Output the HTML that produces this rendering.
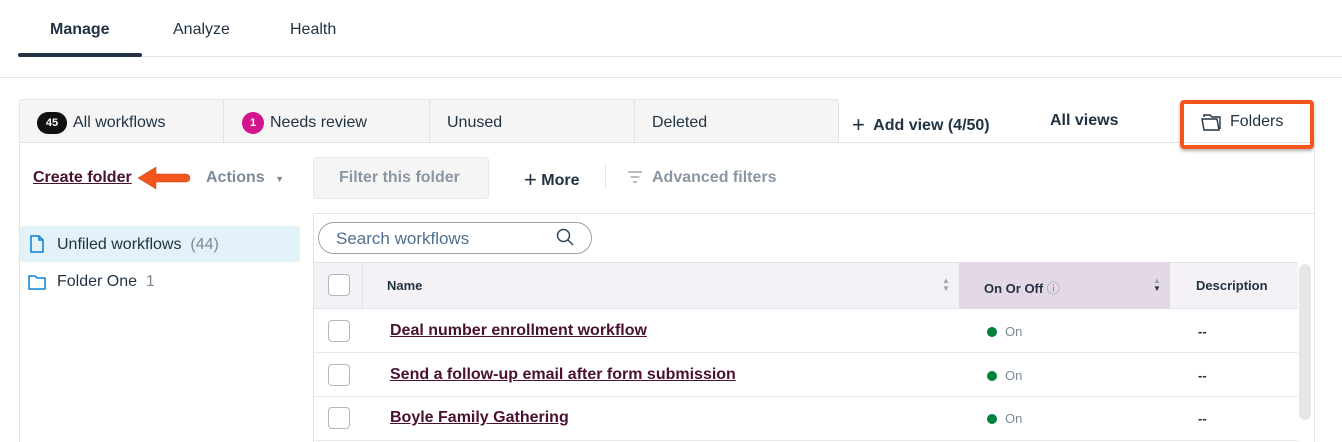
<!DOCTYPE html>
<html><head><style>
*{box-sizing:border-box;margin:0;padding:0}
body{width:1342px;height:442px;overflow:hidden;background:#fff;font-family:"Liberation Sans",sans-serif;color:#213343;position:relative}
.a{position:absolute}
.t{font-size:16px}
.b{font-weight:bold}
.cb{position:absolute;width:22px;height:22px;border:1px solid #b0b8c0;border-radius:4px;background:#fff}
.lnk{color:#4a1230;font-weight:bold;text-decoration:underline;font-size:16px}
.dot{display:inline-block;width:10px;height:10px;border-radius:50%;background:#00823b;margin-right:8px;vertical-align:-1px}
</style></head><body>
<div class="a t b" style="left:50px;top:21px;font-size:16px">Manage</div>
<div class="a t" style="left:173px;top:21px;font-size:16px">Analyze</div>
<div class="a t" style="left:290px;top:21px;font-size:16px">Health</div>
<div class="a" style="left:18px;top:56px;width:1324px;height:1px;background:#dfe3eb"></div>
<div class="a" style="left:18px;top:53px;width:124px;height:4px;background:#213343;border-radius:2px"></div>
<div class="a" style="left:0;top:77px;width:1342px;height:1px;background:#dfe3eb"></div>

<div class="a" style="left:19px;top:99px;width:820px;height:44px;background:#f5f5f5;border:1px solid #dfe3eb;border-bottom:none;border-radius:3px 3px 0 0"></div>
<div class="a" style="left:223px;top:99px;width:1px;height:43px;background:#dfe3eb"></div>
<div class="a" style="left:429px;top:99px;width:1px;height:43px;background:#dfe3eb"></div>
<div class="a" style="left:634px;top:99px;width:1px;height:43px;background:#dfe3eb"></div>
<div class="a" style="left:19px;top:142px;width:1296px;height:1px;background:#dfe3eb"></div>
<div class="a" style="left:37px;top:112px;width:30px;height:22px;border-radius:11px;background:#111;color:#fff;font-size:11px;font-weight:bold;text-align:center;line-height:22px">45</div>
<div class="a t" style="left:73px;top:114px">All workflows</div>
<div class="a" style="left:242px;top:112px;width:22px;height:22px;border-radius:11px;background:#d1168b;color:#fff;font-size:11px;font-weight:bold;text-align:center;line-height:22px">1</div>
<div class="a t" style="left:270px;top:114px">Needs review</div>
<div class="a t" style="left:447px;top:114px">Unused</div>
<div class="a t" style="left:652px;top:114px">Deleted</div>
<div class="a t b" style="left:852px;top:112px"><span style="font-weight:normal;font-size:22px;vertical-align:-2px">+</span>&nbsp; Add view (4/50)</div>
<div class="a t b" style="left:1050px;top:112px">All views</div>
<div class="a" style="left:1180px;top:100px;width:134px;height:49px;border:4px solid #f2561d;border-radius:4px;box-shadow:0 2px 3px rgba(0,0,0,.3)"></div>
<svg class="a" style="left:1201px;top:113px" width="22" height="18" viewBox="0 0 22 18" fill="none" stroke="#213343" stroke-width="1.4"><path d="M3 4V2h6l2 2h8v12"/><path d="M1 6h15l2 11H3z"/></svg>
<div class="a t" style="left:1230px;top:113px">Folders</div>

<div class="a" style="left:19px;top:142px;width:1px;height:300px;background:#dfe3eb"></div>
<div class="a" style="left:1314px;top:150px;width:1px;height:292px;background:#dfe3eb"></div>

<div class="a lnk" style="left:33px;top:169px;color:#4a1230">Create folder</div>
<svg class="a" style="left:136px;top:165px" width="56" height="26" viewBox="0 0 56 26"><path d="M2 13L20 2v7h30a4 4 0 0 1 0 8H20v7z" fill="#f2561d" stroke="#c63e0c" stroke-width=".5"/></svg>
<div class="a t b" style="left:206px;top:169px;color:#7c8a99">Actions <span style="font-size:9px;margin-left:6px">▼</span></div>
<div class="a" style="left:313px;top:157px;width:176px;height:42px;background:#f5f5f5;border:1px solid #e6e9ee;border-radius:3px"></div>
<div class="a t b" style="left:339px;top:169px;color:#8a96a3">Filter this folder</div>
<div class="a t b" style="left:524px;top:167px"><span style="font-weight:normal;font-size:22px;vertical-align:-2px">+</span> More</div>
<div class="a" style="left:605px;top:165px;width:1px;height:24px;background:#dfe3eb"></div>
<svg class="a" style="left:627px;top:171px" width="16" height="12" stroke="#8a96a3" stroke-width="1.3"><path d="M1 1h14M3.5 6h9M6 11h4"/></svg>
<div class="a t b" style="left:652px;top:169px;color:#8a96a3">Advanced filters</div>

<div class="a" style="left:20px;top:226px;width:280px;height:36px;background:#e3f2f9;border-radius:3px"></div>
<svg class="a" style="left:29px;top:235px" width="16" height="18" fill="none" stroke="#0b80d6" stroke-width="1.5"><path d="M2 1h8l4 4v12H2z M10 1v4h4"/></svg>
<div class="a t" style="left:57px;top:236px">Unfiled workflows <span style="color:#7c8a99">&nbsp;(44)</span></div>
<svg class="a" style="left:28px;top:274px" width="18" height="16" fill="none" stroke="#0b80d6" stroke-width="1.5"><path d="M1 2h6l2 2h8v11H1z"/></svg>
<div class="a t" style="left:57px;top:273px">Folder One <span style="color:#7c8a99">&nbsp;1</span></div>

<div class="a" style="left:313px;top:213px;width:1002px;height:1px;background:#dfe3eb"></div>
<div class="a" style="left:313px;top:213px;width:1px;height:229px;background:#dfe3eb"></div>
<div class="a" style="left:318px;top:222px;width:274px;height:32px;border:1px solid #99a5b1;border-radius:16px"></div>
<div class="a" style="left:336px;top:229px;font-size:17px;color:#516f90">Search workflows</div>
<svg class="a" style="left:556px;top:228px" width="18" height="18" fill="none" stroke="#33475b" stroke-width="1.5"><circle cx="7.5" cy="7.5" r="6"/><path d="M12 12l5 5"/></svg>

<div class="a" style="left:314px;top:262px;width:984px;height:47px;background:#f5f2f7;border-top:1px solid #dfe3eb;border-bottom:1px solid #dfe3eb"></div>
<div class="a" style="left:959px;top:262px;width:211px;height:47px;background:#e5d8e6"></div>
<div class="a" style="left:362px;top:262px;width:1px;height:47px;background:#dfe3eb"></div>
<div class="cb" style="left:328px;top:274px"></div>
<div class="a b" style="left:387px;top:278px;font-size:13px">Name</div>
<div class="a" style="left:942px;top:277px;font-size:8px;color:#99a5b1;line-height:8px">▲<br>▼</div>
<div class="a b" style="left:984px;top:278px;font-size:13px">On Or Off <span style="font-weight:normal;color:#7c8a99">ⓘ</span></div>
<div class="a" style="left:1153px;top:277px;font-size:8px;color:#99a5b1;line-height:8px">▲<br><span style="color:#213343">▼</span></div>
<div class="a b" style="left:1196px;top:278px;font-size:13px">Description</div>
<div class="a" style="left:1299px;top:264px;width:12px;height:156px;background:#e6e6e6;border-radius:6px"></div>

<div class="a" style="left:314px;top:352px;width:984px;height:1px;background:#e6e9ee"></div>
<div class="a" style="left:314px;top:396px;width:984px;height:1px;background:#e6e9ee"></div>
<div class="a" style="left:314px;top:440px;width:984px;height:1px;background:#e6e9ee"></div>

<div class="cb" style="left:328px;top:320px"></div>
<div class="a lnk" style="left:390px;top:322px">Deal number enrollment workflow</div>
<div class="a" style="left:987px;top:324px;font-size:13px;color:#7c8a99"><span class="dot"></span>On</div>
<div class="a b" style="left:1198px;top:324px;font-size:13px">--</div>

<div class="cb" style="left:328px;top:364px"></div>
<div class="a lnk" style="left:390px;top:366px">Send a follow-up email after form submission</div>
<div class="a" style="left:987px;top:368px;font-size:13px;color:#7c8a99"><span class="dot"></span>On</div>
<div class="a b" style="left:1198px;top:368px;font-size:13px">--</div>

<div class="cb" style="left:328px;top:407px"></div>
<div class="a lnk" style="left:390px;top:409px">Boyle Family Gathering</div>
<div class="a" style="left:987px;top:411px;font-size:13px;color:#7c8a99"><span class="dot"></span>On</div>
<div class="a b" style="left:1198px;top:411px;font-size:13px">--</div>
</body></html>
